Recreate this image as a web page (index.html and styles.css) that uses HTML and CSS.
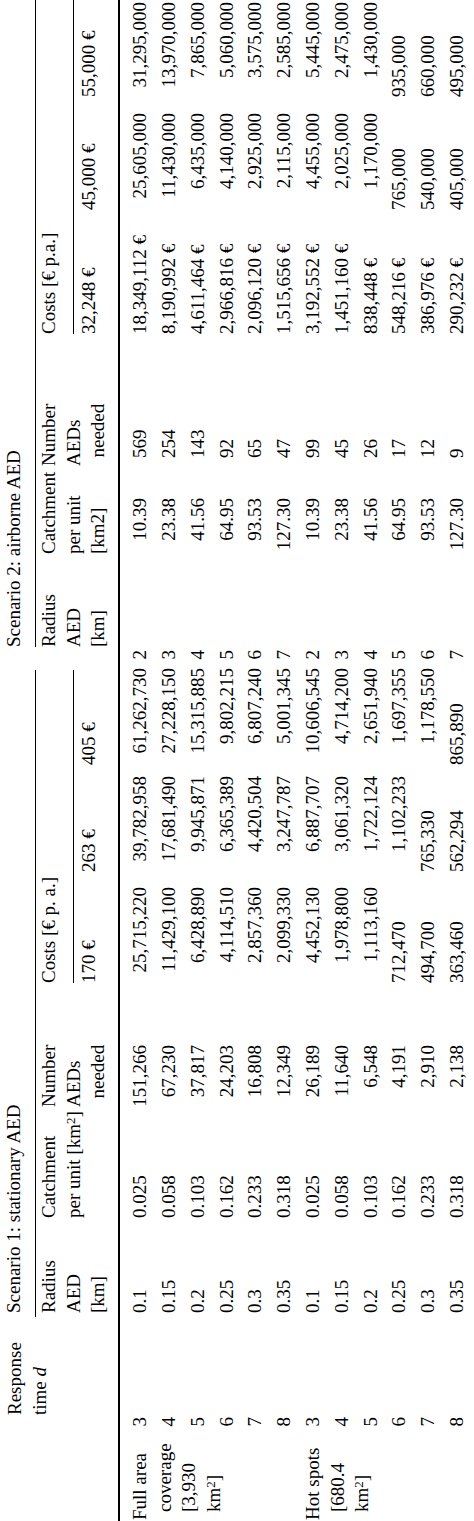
FILE: index.html
```
<!DOCTYPE html>
<html lang="en">
<head>
<meta charset="utf-8">
<title>AED scenarios table</title>
<link rel="stylesheet" href="styles.css">
</head>
<body>
<div class="page">
  <div class="sheet">
    <div class="thead">
      <div class="resp">Response<br>time <i>d</i></div>
      <div class="scen scen1">Scenario 1: stationary AED</div>
      <div class="scen scen2">Scenario 2: airborne AED</div>

      <div class="hc c4">Radius<br>AED<br>[km]</div>
      <div class="hc c5">Catchment<br>per unit [km<span class="sup">2</span>]</div>
      <div class="hc c6 numh"><div>Number</div><div>AEDs</div><div class="end">needed</div></div>
      <div class="costs costs1">Costs [€ p. a.]</div>
      <div class="sub c7">170 €</div>
      <div class="sub c8">263 €</div>
      <div class="sub c9">405 €</div>

      <div class="hc c11">Radius<br>AED<br>[km]</div>
      <div class="hc c12">Catchment<br>per unit<br>[km2]</div>
      <div class="hc c13 numh"><div>Number</div><div>AEDs</div><div class="end">needed</div></div>
      <div class="costs costs2">Costs [€ p.a.]</div>
      <div class="sub c14">32,248 €</div>
      <div class="sub c15">45,000 €</div>
      <div class="sub c16">55,000 €</div>
    </div>
    <div class="midrule"></div>
    <div class="tbody">
      <div class="grp">Full area<br>coverage<br>[3,930<br>km<span class="sup">2</span>]</div>
      <div class="d">3</div><div class="r1">0.1</div><div class="k1">0.025</div><div class="n1">151,266</div><div class="p1">25,715,220</div><div class="p2">39,782,958</div><div class="p3">61,262,730</div><div class="r2">2</div><div class="k2">10.39</div><div class="n2">569</div><div class="q1">18,349,112 €</div><div class="q2">25,605,000</div><div class="q3">31,295,000</div>
      <div class="d">4</div><div class="r1">0.15</div><div class="k1">0.058</div><div class="n1">67,230</div><div class="p1">11,429,100</div><div class="p2">17,681,490</div><div class="p3">27,228,150</div><div class="r2">3</div><div class="k2">23.38</div><div class="n2">254</div><div class="q1">8,190,992 €</div><div class="q2">11,430,000</div><div class="q3">13,970,000</div>
      <div class="d">5</div><div class="r1">0.2</div><div class="k1">0.103</div><div class="n1">37,817</div><div class="p1">6,428,890</div><div class="p2">9,945,871</div><div class="p3">15,315,885</div><div class="r2">4</div><div class="k2">41.56</div><div class="n2">143</div><div class="q1">4,611,464 €</div><div class="q2">6,435,000</div><div class="q3">7,865,000</div>
      <div class="d">6</div><div class="r1">0.25</div><div class="k1">0.162</div><div class="n1">24,203</div><div class="p1">4,114,510</div><div class="p2">6,365,389</div><div class="p3">9,802,215</div><div class="r2">5</div><div class="k2">64.95</div><div class="n2">92</div><div class="q1">2,966,816 €</div><div class="q2">4,140,000</div><div class="q3">5,060,000</div>
      <div class="d">7</div><div class="r1">0.3</div><div class="k1">0.233</div><div class="n1">16,808</div><div class="p1">2,857,360</div><div class="p2">4,420,504</div><div class="p3">6,807,240</div><div class="r2">6</div><div class="k2">93.53</div><div class="n2">65</div><div class="q1">2,096,120 €</div><div class="q2">2,925,000</div><div class="q3">3,575,000</div>
      <div class="d">8</div><div class="r1">0.35</div><div class="k1">0.318</div><div class="n1">12,349</div><div class="p1">2,099,330</div><div class="p2">3,247,787</div><div class="p3">5,001,345</div><div class="r2">7</div><div class="k2">127.30</div><div class="n2">47</div><div class="q1">1,515,656 €</div><div class="q2">2,115,000</div><div class="q3">2,585,000</div>

      <div class="grp">Hot spots<br>[680.4<br>km<span class="sup">2</span>]</div>
      <div class="d">3</div><div class="r1">0.1</div><div class="k1">0.025</div><div class="n1">26,189</div><div class="p1">4,452,130</div><div class="p2">6,887,707</div><div class="p3">10,606,545</div><div class="r2">2</div><div class="k2">10.39</div><div class="n2">99</div><div class="q1">3,192,552 €</div><div class="q2">4,455,000</div><div class="q3">5,445,000</div>
      <div class="d">4</div><div class="r1">0.15</div><div class="k1">0.058</div><div class="n1">11,640</div><div class="p1">1,978,800</div><div class="p2">3,061,320</div><div class="p3">4,714,200</div><div class="r2">3</div><div class="k2">23.38</div><div class="n2">45</div><div class="q1">1,451,160 €</div><div class="q2">2,025,000</div><div class="q3">2,475,000</div>
      <div class="d">5</div><div class="r1">0.2</div><div class="k1">0.103</div><div class="n1">6,548</div><div class="p1">1,113,160</div><div class="p2">1,722,124</div><div class="p3">2,651,940</div><div class="r2">4</div><div class="k2">41.56</div><div class="n2">26</div><div class="q1">838,448 €</div><div class="q2">1,170,000</div><div class="q3">1,430,000</div>
      <div class="d">6</div><div class="r1">0.25</div><div class="k1">0.162</div><div class="n1">4,191</div><div class="p1 s">712,470</div><div class="p2">1,102,233</div><div class="p3">1,697,355</div><div class="r2">5</div><div class="k2">64.95</div><div class="n2">17</div><div class="q1">548,216 €</div><div class="q2 s">765,000</div><div class="q3 s">935,000</div>
      <div class="d">7</div><div class="r1">0.3</div><div class="k1">0.233</div><div class="n1">2,910</div><div class="p1 s">494,700</div><div class="p2 s">765,330</div><div class="p3">1,178,550</div><div class="r2">6</div><div class="k2">93.53</div><div class="n2">12</div><div class="q1">386,976 €</div><div class="q2 s">540,000</div><div class="q3 s">660,000</div>
      <div class="d">8</div><div class="r1">0.35</div><div class="k1">0.318</div><div class="n1">2,138</div><div class="p1 s">363,460</div><div class="p2 s">562,294</div><div class="p3 s">865,890</div><div class="r2">7</div><div class="k2">127.30</div><div class="n2">9</div><div class="q1">290,232 €</div><div class="q2 s">405,000</div><div class="q3 s">495,000</div>
    </div>
  </div>
</div>
</body>
</html>
```
FILE: styles.css
```
html, body {
  margin: 0;
  padding: 0;
  background: #fff;
}

body {
  overflow: hidden;
}

.page {
  width: 474px;
  height: 1521px;
  overflow: hidden;
}

/* the table is typeset upright, then turned a quarter turn counter-clockwise */
.sheet {
  width: 1530px;
  height: 474px;
  transform-origin: 0 0;
  transform: translateY(1521px) rotate(-90deg);
  font-family: "Liberation Serif", "Times New Roman", serif;
  font-size: 19px;
  color: #000;
  white-space: nowrap;
}

.thead,
.tbody {
  display: grid;
  grid-template-columns: 92px 14px 102px 95px 111px 124px 111px 107px 104px 14px 93px 88px 132px 124px 113px 106px;
}

/* ---------- header ---------- */
.thead {
  grid-template-rows: 36px 38px 43.5px;
  line-height: 24.5px;
}

.resp {
  grid-column: 3;
  grid-row: 1 / 4;
  line-height: 25px;
  padding-top: 2.1px;
}

.scen {
  grid-row: 1;
  padding-top: 2.35px;
  border-bottom: 1px solid #000;
}

.scen1 {
  grid-column: 4 / 10;
  margin: 0 9px 0 -4px;
  padding-left: 4px;
}

.scen2 {
  grid-column: 11 / 17;
}

.hc {
  grid-row: 2 / 4;
  padding-top: 1.35px;
}

.numh {
  justify-self: start;
}

.numh .end {
  text-align: right;
}

.costs {
  grid-row: 2;
  padding-top: 1.35px;
  border-bottom: 1px solid #000;
}

.costs1 {
  grid-column: 7 / 10;
  margin-right: 9px;
}

.costs2 {
  grid-column: 14 / 17;
}

.sub {
  grid-row: 3;
  padding-top: 3.35px;
}

.c4 { grid-column: 4; }
.c5 { grid-column: 5; }
.c6 { grid-column: 6; }
.c7 { grid-column: 7; }
.c8 { grid-column: 8; }
.c9 { grid-column: 9; }
.c11 { grid-column: 11; }
.c12 { grid-column: 12; }
.c13 { grid-column: 13; }
.c14 { grid-column: 14; }
.c15 { grid-column: 15; }
.c16 { grid-column: 16; }

.sup {
  font-size: 0.68em;
  vertical-align: 0.42em;
  line-height: 0;
}

.midrule {
  height: 2.5px;
  background: #000;
}

/* ---------- body ---------- */
.tbody {
  padding-top: 6.2px;
  grid-auto-rows: 28.8px;
  line-height: 28.8px;
}

.grp {
  grid-column: 1;
  grid-row: span 6;
  line-height: 24.5px;
  padding-top: 2.15px;
  padding-left: 9px;
  text-indent: -8px;
}

.d  { grid-column: 2;  text-align: right; padding-right: 2px; }
.r1 { grid-column: 4;  text-align: left; }
.k1 { grid-column: 5;  text-align: left; }
.n1 { grid-column: 6;  text-align: right; padding-right: 62px; }
.p1 { grid-column: 7;  text-align: right; padding-right: 15px; }
.p2 { grid-column: 8;  text-align: right; padding-right: 11px; }
.p3 { grid-column: 9;  text-align: right; padding-right: 7px; }
.r2 { grid-column: 10; text-align: right; padding-right: 3px; }
.k2 { grid-column: 12; text-align: right; padding-right: 32px; }
.n2 { grid-column: 13; text-align: left; padding-left: 8px; }
.q1 { grid-column: 14; text-align: left; }
.q2 { grid-column: 15; text-align: right; padding-right: 16px; }
.q3 { grid-column: 16; text-align: right; padding-right: 11px; }

/* shorter figures sit at the column's left edge in the source */
.s {
  text-align: left;
  padding-right: 0;
}
```
